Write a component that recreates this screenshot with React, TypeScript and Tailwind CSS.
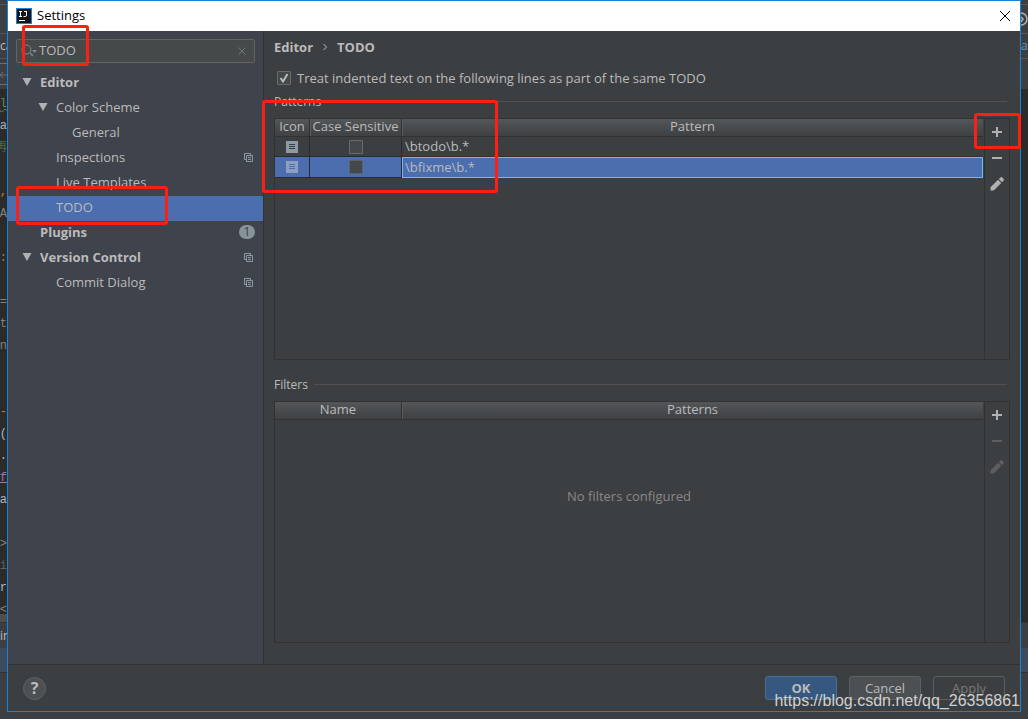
import { useState } from 'react'
import clsx from 'clsx'

type TreeItem = {
  label: string
  indent: string
  bold?: boolean
  open?: boolean
  copy?: boolean
  badge?: string
}

const tree: TreeItem[] = [
  { label: 'Editor', indent: 'pl-[14px]', bold: true, open: true },
  { label: 'Color Scheme', indent: 'pl-[30px]', open: true },
  { label: 'General', indent: 'pl-[64px]' },
  { label: 'Inspections', indent: 'pl-[48px]', copy: true },
  { label: 'Live Templates', indent: 'pl-[48px]' },
  { label: 'TODO', indent: 'pl-[48px]' },
  { label: 'Plugins', indent: 'pl-[32px]', bold: true, badge: '1' },
  { label: 'Version Control', indent: 'pl-[14px]', bold: true, open: true, copy: true },
  { label: 'Commit Dialog', indent: 'pl-[48px]', copy: true },
]

// slice of the editor that shows beside the dialog, one entry per code line
const codeLines = [
  { text: 'l', color: 'text-[#6a8759] underline decoration-wavy decoration-1' },
  { text: 'a', color: 'text-[#a9b7c6]' },
  { text: '再', color: 'text-[#4f6b3f]' },
  { text: '', color: '' },
  { text: ',', color: 'text-[#cc7832]' },
  { text: 'A', color: 'text-[#808080]' },
  { text: '', color: '' },
  { text: ':', color: 'text-[#808080]' },
  { text: '', color: '' },
  { text: '=', color: 'text-[#808080]' },
  { text: 't', color: 'text-[#808080]' },
  { text: 'n', color: 'text-[#808080]' },
  { text: '', color: '' },
  { text: '', color: '' },
  { text: '-', color: 'text-[#cc7832]' },
  { text: '(', color: 'text-[#a9b7c6]' },
  { text: '.', color: 'text-[#a9b7c6]' },
  { text: 'f', color: 'text-[#9876aa] underline' },
  { text: 'a', color: 'text-[#a9b7c6]' },
  { text: '', color: '' },
  { text: '>', color: 'text-[#808080]' },
  { text: 'i', color: 'text-[#606060]' },
  { text: 'r', color: 'text-[#a9b7c6]' },
  { text: '<', color: 'text-[#808080]' },
]

function EditorEdge({ side }: { side: 'left' | 'right' }) {
  const left = side === 'left'
  return (
    <div className="flex w-[7px] shrink-0 flex-col overflow-hidden text-xs whitespace-nowrap">
      <div className="h-[5px] border-b border-[#555555] bg-[#3c3f41]" />
      <div className="flex h-[29px] items-center border-b border-[#555555] bg-[#3c3f41]">
        {!left && (
          <svg viewBox="0 0 7 14" className="h-[14px] w-[7px] shrink-0" fill="none" stroke="#afb1b3" strokeWidth="1.5">
            <path d="M0 1a6 6 0 0 1 0 12M0 5l2 2-2 3" />
          </svg>
        )}
      </div>
      <div
        className={clsx(
          'flex h-[25px] items-center border-b border-[#555555] bg-[#3c3f41]',
          left ? 'text-[#bbbbbb]' : 'text-[#6897bb]',
        )}
      >
        {left ? 'ca' : 'av'}
      </div>
      <div className="flex h-[30px] items-center bg-[#3c3f41]">
        {left && (
          <svg viewBox="0 0 7 22" className="h-[22px] w-[7px] shrink-0" fill="none" stroke="#6e6e6e">
            <path d="M0 .5h7M0 21.5h7M0 12h7M3 9l-3 3 3 3" />
          </svg>
        )}
      </div>
      <div className="flex h-0 flex-auto flex-col items-end overflow-hidden bg-[#2b2b2b] pt-1 font-['Liberation_Mono','Noto_Sans_CJK_SC',monospace]">
        {left &&
          codeLines.map((line, i) => (
            <div key={i} className={clsx('flex h-[22px] shrink-0 items-center', line.color)}>
              {line.text}
            </div>
          ))}
      </div>
      <div className={clsx('h-2', left ? 'bg-[#4f4f4f]' : 'bg-[#2b2b2b]')} />
      <div className="flex h-[26px] items-center border-t border-[#323232] bg-[#3c3f41] text-[#bbbbbb]">{left && 'in'}</div>
      <div className="h-6 bg-[#3d4b5c]" />
      <div className="h-10 border-t border-[#323232] bg-[#3c3f41]" />
    </div>
  )
}

function Triangle() {
  return (
    <svg viewBox="0 0 10 8" className="h-2 w-[10px] shrink-0" fill="#afb1b3">
      <path d="M.5 0h9L5 8z" />
    </svg>
  )
}

function CopyIcon() {
  return (
    <svg viewBox="0 0 9 9" className="h-[9px] w-[9px]" fill="none" stroke="#8d98a5">
      <path d="M2 6.5H.5v-6h6V2M2.5 2.5h6v6h-6zM4 4.5h3M4 6.5h3" />
    </svg>
  )
}

function NoteIcon({ selected }: { selected?: boolean }) {
  return (
    <svg viewBox="0 0 12 12" className="mx-auto h-3 w-3" fill="none">
      <path d="M0 0h12v12H0z" fill={selected ? '#8c9fc0' : '#8d9aa3'} />
      <path d="M3 3.5h6M3 5.5h6M3 7.5h6" stroke={selected ? '#4b6eaf' : '#3c3f41'} />
    </svg>
  )
}

function GroupTitle({ children }: { children: string }) {
  return (
    <div className="flex h-4 items-center gap-[6px] text-xs">
      <h2 className="pt-[2px]">{children}</h2>
      <div className="mr-[3px] h-px flex-1 bg-[#515151]" />
    </div>
  )
}

function Tools({ disabled }: { disabled?: boolean }) {
  const color = disabled ? 'text-[#5c5e60]' : 'text-[#afb1b3]'
  return (
    <div className="flex w-[25px] shrink-0 flex-col items-center border-l border-[#323232]">
      <button type="button" aria-label="Add" className="flex h-[26px] w-6 items-center justify-center text-[#afb1b3]">
        <svg viewBox="0 0 10 10" className="h-[10px] w-[10px]" fill="currentColor">
          <path d="M4 0h2v4h4v2H6v4H4V6H0V4h4z" />
        </svg>
      </button>
      <button type="button" aria-label="Remove" disabled={disabled} className={clsx('flex h-[26px] w-6 items-center justify-center', color)}>
        <svg viewBox="0 0 10 2" className="h-[2px] w-[10px]" fill="currentColor">
          <path d="M0 0h10v2H0z" />
        </svg>
      </button>
      <button type="button" aria-label="Edit" disabled={disabled} className={clsx('flex h-[26px] w-6 items-center justify-center', color)}>
        <svg viewBox="0 0 14 14" className="h-[14px] w-[14px]" fill="currentColor">
          <path d="M.5 13.5v-3.2L8 2.8 11.2 6l-7.5 7.5zM8.8 2l1.3-1.3a1.7 1.7 0 0 1 2.4 0l.8.8a1.7 1.7 0 0 1 0 2.4L12 5.2z" />
        </svg>
      </button>
    </div>
  )
}

const headRow = 'h-[18px] bg-linear-to-b from-[#53575a] to-[#3d3f41]'
const headCell = 'border-b border-[#323232] p-0 pb-[2px] text-center font-normal leading-[15px]'
const headLight = 'shadow-[inset_1px_0_0_#5a5d5f]'
const cell = 'border-r border-b border-[#2b2b2b] p-0'
const box = 'mx-auto block h-[14px] w-[14px] appearance-none rounded-[1px] border bg-[#43494a]'

function Search() {
  const [query, setQuery] = useState('TODO')
  return (
    <div className="mx-2 flex h-6 items-center rounded-[2px] border border-[#646464] bg-[#45494a] pl-1">
      <svg viewBox="0 0 16 14" className="h-[14px] w-4 shrink-0" fill="none" stroke="#7f8b91">
        <circle cx="5.5" cy="5.5" r="4.5" />
        <path d="M9 9l3 3" strokeWidth="1.5" />
        <path d="M11 6h5l-2.5 3z" fill="#7f8b91" stroke="none" />
      </svg>
      <input
        aria-label="Search settings"
        value={query}
        onChange={(e) => setQuery(e.target.value)}
        className="ml-[2px] h-5 min-w-0 flex-1 bg-transparent pb-[2px] outline-none"
      />
      <button type="button" aria-label="Clear" onClick={() => setQuery('')} className="mr-2">
        <svg viewBox="0 0 8 8" className="h-2 w-2" stroke="#6d777c">
          <path d="M.5.5l7 7M7.5.5l-7 7" />
        </svg>
      </button>
    </div>
  )
}

function Sidebar() {
  return (
    <aside className="w-64 shrink-0 border-r border-[#323232] bg-[#3f434c] pt-2">
      <Search />
      <ul className="mt-2">
        {tree.map((item) => (
          <li
            key={item.label}
            className={clsx(
              'flex h-[25px] items-center pr-[10px] pb-[3px]',
              item.indent,
              item.bold && 'font-bold',
              item.label === 'TODO' && 'bg-[#4b6eaf]',
            )}
          >
            {item.open && (
              <span className="mr-2">
                <Triangle />
              </span>
            )}
            <span className="flex-1">{item.label}</span>
            {item.copy && <CopyIcon />}
            {item.badge && (
              <span className="-mr-[2px] flex h-[14px] w-4 items-center justify-center rounded-full bg-[#87939a] text-xs font-normal text-[#3c3f41]">
                {item.badge}
              </span>
            )}
          </li>
        ))}
      </ul>
    </aside>
  )
}

function PatternsTable() {
  return (
    <div className="flex flex-1 border border-[#323232]">
      <div className="flex-1 pr-px">
        <table className="w-full table-fixed border-separate border-spacing-0">
          <colgroup>
            <col className="w-[35px]" />
            <col className="w-[92px]" />
            <col />
          </colgroup>
          <thead>
            <tr className={headRow}>
              <th className={clsx(headCell, 'border-r')}>Icon</th>
              <th className={clsx(headCell, headLight, 'border-r')}>Case Sensitive</th>
              <th className={clsx(headCell, headLight)}>Pattern</th>
            </tr>
          </thead>
          <tbody>
            <tr className="h-5">
              <td className={cell}>
                <NoteIcon />
              </td>
              <td className={cell}>
                <input type="checkbox" aria-label="Case sensitive \btodo\b.*" className={clsx(box, 'border-[#6b6b6b]')} />
              </td>
              <td className="border-b border-[#323232] p-0 pb-[2px] pl-[3px] leading-4">{'\\btodo\\b.*'}</td>
            </tr>
            <tr className="h-[21px] bg-[#4b6eaf]">
              <td className={cell}>
                <NoteIcon selected />
              </td>
              <td className={cell}>
                <input type="checkbox" aria-label="Case sensitive \bfixme\b.*" className={clsx(box, 'border-[#5f6265]')} />
              </td>
              <td className="border border-[#75b5f5] p-0 pb-[2px] pl-[2px] leading-4">{'\\bfixme\\b.*'}</td>
            </tr>
          </tbody>
        </table>
      </div>
      <Tools />
    </div>
  )
}

function FiltersTable() {
  return (
    <div className="flex flex-1 border border-[#323232]">
      <div className="flex flex-1 flex-col pr-px">
        <table className="w-full table-fixed border-separate border-spacing-0">
          <colgroup>
            <col className="w-[127px]" />
            <col />
          </colgroup>
          <thead>
            <tr className={headRow}>
              <th className={clsx(headCell, 'border-r')}>Name</th>
              <th className={clsx(headCell, headLight)}>Patterns</th>
            </tr>
          </thead>
        </table>
        <p className="mt-[66px] text-center text-[#888888]">No filters configured</p>
      </div>
      <Tools disabled />
    </div>
  )
}

const redBox = 'pointer-events-none absolute rounded-[3px] border-3 border-[#ff1e12]'
const footerButton = 'h-6 w-[72px] rounded-[3px] border'

export default function App() {
  return (
    <div className="flex min-h-screen flex-col bg-[#3c3f41] font-['Open_Sans','Noto_Sans_CJK_SC',sans-serif] text-[13px] leading-5 text-[#bbbbbb]">
      <div className="flex flex-1">
        <EditorEdge side="left" />
        <div className="relative flex min-w-0 flex-1 flex-col border border-[#1883d7] bg-[#3c3f41]">
          <header className="flex h-[30px] items-center bg-white pr-[10px] pl-2 text-black">
            <svg viewBox="0 0 16 16" className="h-4 w-4" fill="none">
              <path d="M0 0h16v16H0z" fill="#1883d7" />
              <path d="M1 1h14v14H1z" fill="#15151c" />
              <path d="M3 3.5h3M4.5 3v5M3 8.5h3M8 3.5h3M10.5 3v4q0 1.5-1 1.5h-2M3 12.5h6" stroke="#fff" />
            </svg>
            <h1 className="ml-[5px] flex-1 pb-[2px]">Settings</h1>
            <button type="button" aria-label="Close">
              <svg viewBox="0 0 10 10" className="h-[10px] w-[10px]" stroke="#000">
                <path d="M0 0l10 10M10 0L0 10" />
              </svg>
            </button>
          </header>

          <div className="flex flex-1">
            <Sidebar />
            <main className="flex min-w-0 flex-1 flex-col pr-[10px] pb-[21px] pl-[10px]">
              <nav className="flex h-8 items-center font-bold">
                <span>Editor</span>
                <svg viewBox="0 0 4 8" className="mx-[10px] h-2 w-1" fill="none" stroke="#bbbbbb">
                  <path d="M.5 1l3 3-3 3" />
                </svg>
                <span>TODO</span>
              </nav>
              <label className="flex h-[30px] items-center pl-[3px]">
                <span className="grid h-[14px] w-[14px]">
                  <input
                    type="checkbox"
                    defaultChecked
                    className="peer col-start-1 row-start-1 h-[14px] w-[14px] appearance-none rounded-[1px] border border-[#6b6b6b] bg-[#43494a]"
                  />
                  <svg
                    viewBox="0 0 14 14"
                    className="pointer-events-none invisible col-start-1 row-start-1 h-[14px] w-[14px] peer-checked:visible"
                    fill="none"
                    stroke="#bbbbbb"
                    strokeWidth="2"
                  >
                    <path d="M3.5 7L6 10.5 10.5 3" />
                  </svg>
                </span>
                <span className="ml-[6px]">Treat indented text on the following lines as part of the same TODO</span>
              </label>
              <GroupTitle>Patterns</GroupTitle>
              <div className="mt-[9px] flex flex-1">
                <PatternsTable />
              </div>
              <div className="mt-4">
                <GroupTitle>Filters</GroupTitle>
              </div>
              <div className="mt-[9px] flex flex-1">
                <FiltersTable />
              </div>
            </main>
          </div>

          <footer className="flex h-[47px] items-center gap-3 border-t border-[#323232] pr-[15px] pl-[15px]">
            <button
              type="button"
              aria-label="Help"
              className="mr-auto flex h-[23px] w-[23px] items-center justify-center rounded-full border border-[#5e6060] bg-[#4c5052] text-base font-bold"
            >
              ?
            </button>
            <button type="button" className={clsx(footerButton, 'border-[#4c708c] bg-[#365880] font-bold')}>
              OK
            </button>
            <button type="button" className={clsx(footerButton, 'border-[#5e6060] bg-[#4c5052]')}>
              Cancel
            </button>
            <button type="button" disabled className={clsx(footerButton, 'border-[#5e6060] text-[#777777]')}>
              Apply
            </button>
          </footer>

          {/* highlights */}
          <div className={clsx(redBox, 'top-6 left-[14px] h-[41px] w-[67px]')} />
          <div className={clsx(redBox, 'top-[185px] left-2 h-[39px] w-[152px]')} />
          <div className={clsx(redBox, 'top-[99px] left-[254px] h-[93px] w-[236px]')} />
          <div className={clsx(redBox, 'top-[112px] -right-px h-9 w-[47px]')} />
          <p className="pointer-events-none absolute right-0 bottom-0 font-['Liberation_Sans',sans-serif] text-base leading-5 text-[#d0d0d0]">
            https://blog.csdn.net/qq_26356861
          </p>
        </div>
        <EditorEdge side="right" />
      </div>
      <div className="h-[7px]" />
    </div>
  )
}
